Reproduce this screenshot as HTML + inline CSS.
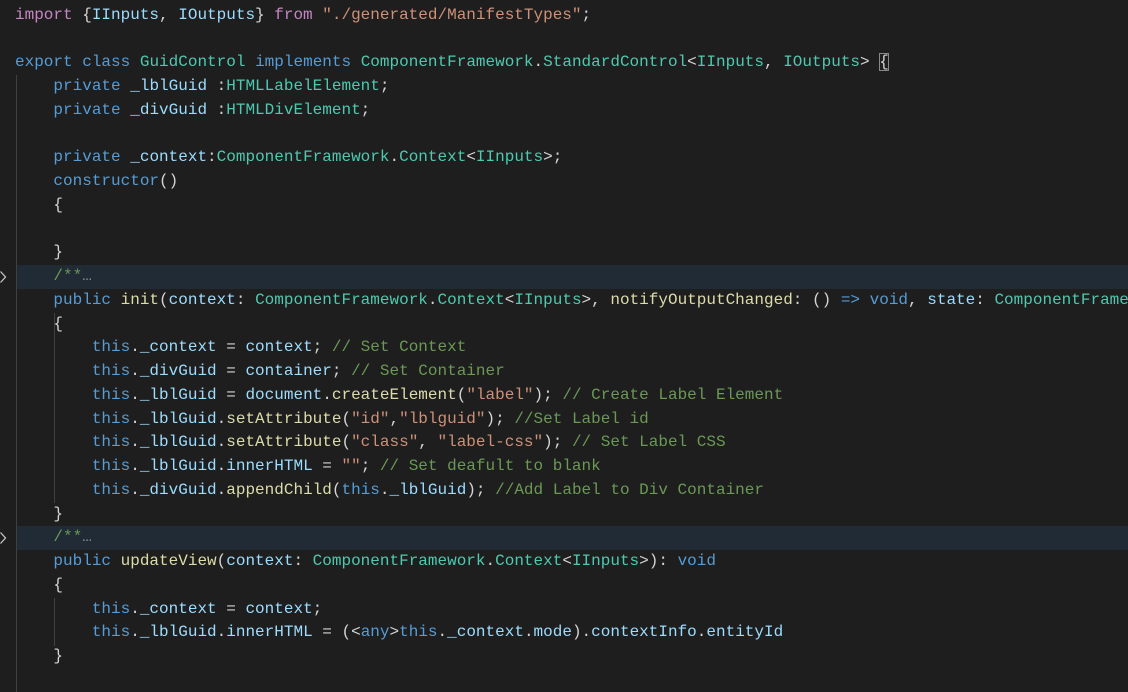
<!DOCTYPE html>
<html><head><meta charset="utf-8"><style>
html,body{margin:0;padding:0;background:#1e1e1e;width:1128px;height:692px;overflow:hidden}
.ed{position:relative;width:1128px;height:692px}
pre{position:absolute;left:15px;top:3.75px;margin:0;font-family:"Liberation Mono",monospace;font-size:16px;line-height:23.75px;color:#d4d4d4;white-space:pre}
.k{color:#c586c0}.b{color:#569cd6}.t{color:#4ec9b0}.v{color:#9cdcfe}.f{color:#dcdcaa}.s{color:#ce9178}.c{color:#6a9955}
.hl{position:absolute;left:16px;right:0;height:23.75px;background:#202b36}
.g{position:absolute;width:1px;background:#404040}
.chev{position:absolute;left:0}
.br{outline:1px solid #888;outline-offset:-1px}
</style></head><body><div class="ed">
<div class="hl" style="top:265px"></div>
<div class="hl" style="top:526px"></div>
<div class="g" style="left:16px;top:75px;height:617px"></div>
<div class="g" style="left:54px;top:313px;height:190px"></div>
<div class="g" style="left:54px;top:598px;height:48px"></div>
<svg class="chev" style="top:270px" width="8" height="14"><path d="M0.5 1.5 L5.5 7 L0.5 12.5" stroke="#c5c5c5" stroke-width="1.3" fill="none"/></svg>
<svg class="chev" style="top:531px" width="8" height="14"><path d="M0.5 1.5 L5.5 7 L0.5 12.5" stroke="#c5c5c5" stroke-width="1.3" fill="none"/></svg>
<pre><span class="k">import</span> {<span class="v">IInputs</span>, <span class="v">IOutputs</span>} <span class="k">from</span> <span class="s">"./generated/ManifestTypes"</span>;

<span class="b">export</span> <span class="b">class</span> <span class="t">GuidControl</span> <span class="b">implements</span> <span class="t">ComponentFramework</span>.<span class="t">StandardControl</span>&lt;<span class="t">IInputs</span>, <span class="t">IOutputs</span>&gt; <span class="br">{</span>
    <span class="b">private</span> <span class="v">_lblGuid</span> :<span class="t">HTMLLabelElement</span>;
    <span class="b">private</span> <span class="v">_divGuid</span> :<span class="t">HTMLDivElement</span>;

    <span class="b">private</span> <span class="v">_context</span>:<span class="t">ComponentFramework</span>.<span class="t">Context</span>&lt;<span class="t">IInputs</span>&gt;;
    <span class="b">constructor</span>()
    {

    }
    <span class="c">/**</span><span style="color:#8a8a8a">…</span>
    <span class="b">public</span> <span class="f">init</span>(<span class="v">context</span>: <span class="t">ComponentFramework</span>.<span class="t">Context</span>&lt;<span class="t">IInputs</span>&gt;, <span class="f">notifyOutputChanged</span>: () <span class="b">=&gt;</span> <span class="b">void</span>, <span class="v">state</span>: <span class="t">ComponentFramework</span>
    {
        <span class="b">this</span>.<span class="v">_context</span> = <span class="v">context</span>; <span class="c">// Set Context</span>
        <span class="b">this</span>.<span class="v">_divGuid</span> = <span class="v">container</span>; <span class="c">// Set Container</span>
        <span class="b">this</span>.<span class="v">_lblGuid</span> = <span class="v">document</span>.<span class="f">createElement</span>(<span class="s">"label"</span>); <span class="c">// Create Label Element</span>
        <span class="b">this</span>.<span class="v">_lblGuid</span>.<span class="f">setAttribute</span>(<span class="s">"id"</span>,<span class="s">"lblguid"</span>); <span class="c">//Set Label id</span>
        <span class="b">this</span>.<span class="v">_lblGuid</span>.<span class="f">setAttribute</span>(<span class="s">"class"</span>, <span class="s">"label-css"</span>); <span class="c">// Set Label CSS</span>
        <span class="b">this</span>.<span class="v">_lblGuid</span>.<span class="v">innerHTML</span> = <span class="s">""</span>; <span class="c">// Set deafult to blank</span>
        <span class="b">this</span>.<span class="v">_divGuid</span>.<span class="f">appendChild</span>(<span class="b">this</span>.<span class="v">_lblGuid</span>); <span class="c">//Add Label to Div Container</span>
    }
    <span class="c">/**</span><span style="color:#8a8a8a">…</span>
    <span class="b">public</span> <span class="f">updateView</span>(<span class="v">context</span>: <span class="t">ComponentFramework</span>.<span class="t">Context</span>&lt;<span class="t">IInputs</span>&gt;): <span class="b">void</span>
    {
        <span class="b">this</span>.<span class="v">_context</span> = <span class="v">context</span>;
        <span class="b">this</span>.<span class="v">_lblGuid</span>.<span class="v">innerHTML</span> = (&lt;<span class="b">any</span>&gt;<span class="b">this</span>.<span class="v">_context</span>.<span class="v">mode</span>).<span class="v">contextInfo</span>.<span class="v">entityId</span>
    }
</pre>
</div></body></html>
